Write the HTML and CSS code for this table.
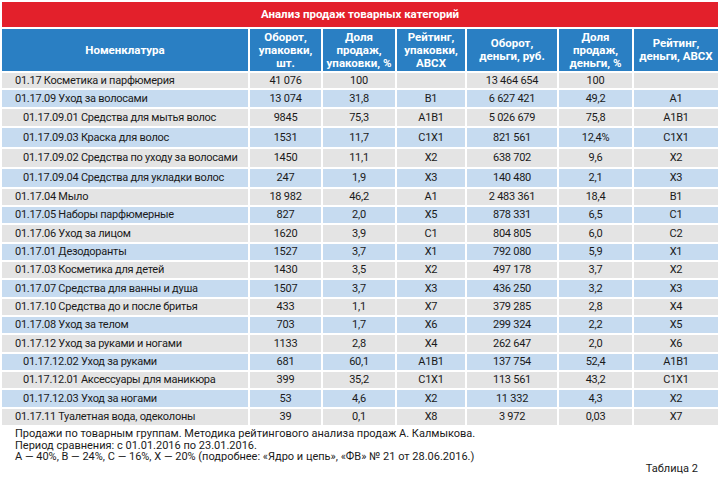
FILE: index.html
```html
<!DOCTYPE html>
<html lang="ru">
<head>
<meta charset="utf-8">
<link rel="stylesheet" href="styles.css">
</head>
<body>
<div class="title">Анализ продаж товарных категорий</div>
<table class="grid">
  <colgroup>
    <col class="c1"><col class="c2"><col class="c3"><col class="c4"><col class="c5"><col class="c6"><col class="c7">
  </colgroup>
  <thead>
    <tr>
      <th>Номенклатура</th>
      <th>Оборот,<br>упаковки,<br>шт.</th>
      <th>Доля<br>продаж,<br>упаковки, %</th>
      <th>Рейтинг,<br>упаковки,<br>ABCX</th>
      <th>Оборот,<br>деньги, руб.</th>
      <th>Доля<br>продаж,<br>деньги, %</th>
      <th>Рейтинг,<br>деньги, ABCX</th>
    </tr>
  </thead>
  <tbody>
    <tr class="g h15"><td>01.17 Косметика и парфюмерия</td><td>41 076</td><td>100</td><td></td><td>13 464 654</td><td>100</td><td></td></tr>
    <tr class="b h17"><td>01.17.09 Уход за волосами</td><td>13 074</td><td>31,8</td><td>B1</td><td>6 627 421</td><td>49,2</td><td>A1</td></tr>
    <tr class="g h17"><td class="ind">01.17.09.01 Средства для мытья волос</td><td>9845</td><td>75,3</td><td>A1B1</td><td>5 026 679</td><td>75,8</td><td>A1B1</td></tr>
    <tr class="b h19"><td class="ind">01.17.09.03 Краска для волос</td><td>1531</td><td>11,7</td><td>C1X1</td><td>821 561</td><td>12,4%</td><td>C1X1</td></tr>
    <tr class="g h18"><td class="ind">01.17.09.02 Средства по уходу за волосами</td><td>1450</td><td>11,1</td><td>X2</td><td>638 702</td><td>9,6</td><td>X2</td></tr>
    <tr class="b h18"><td class="ind">01.17.09.04 Средства для укладки волос</td><td>247</td><td>1,9</td><td>X3</td><td>140 480</td><td>2,1</td><td>X3</td></tr>
    <tr class="g h16"><td>01.17.04 Мыло</td><td>18 982</td><td>46,2</td><td>A1</td><td>2 483 361</td><td>18,4</td><td>B1</td></tr>
    <tr class="b h16"><td>01.17.05 Наборы парфюмерные</td><td>827</td><td>2,0</td><td>X5</td><td>878 331</td><td>6,5</td><td>C1</td></tr>
    <tr class="g h17"><td>01.17.06 Уход за лицом</td><td>1620</td><td>3,9</td><td>C1</td><td>804 805</td><td>6,0</td><td>C2</td></tr>
    <tr class="b h16"><td>01.17.01 Дезодоранты</td><td>1527</td><td>3,7</td><td>X1</td><td>792 080</td><td>5,9</td><td>X1</td></tr>
    <tr class="g h16"><td>01.17.03 Косметика для детей</td><td>1430</td><td>3,5</td><td>X2</td><td>497 178</td><td>3,7</td><td>X2</td></tr>
    <tr class="b h17"><td>01.17.07 Средства для ванны и душа</td><td>1507</td><td>3,7</td><td>X3</td><td>436 250</td><td>3,2</td><td>X3</td></tr>
    <tr class="g h16"><td>01.17.10 Средства до и после бритья</td><td>433</td><td>1,1</td><td>X7</td><td>379 285</td><td>2,8</td><td>X4</td></tr>
    <tr class="b h16"><td>01.17.08 Уход за телом</td><td>703</td><td>1,7</td><td>X6</td><td>299 324</td><td>2,2</td><td>X5</td></tr>
    <tr class="g h17"><td>01.17.12 Уход за руками и ногами</td><td>1133</td><td>2,8</td><td>X4</td><td>262 647</td><td>2,0</td><td>X6</td></tr>
    <tr class="b h16"><td class="ind">01.17.12.02 Уход за руками</td><td>681</td><td>60,1</td><td>A1B1</td><td>137 754</td><td>52,4</td><td>A1B1</td></tr>
    <tr class="g h16"><td class="ind">01.17.12.01 Аксессуары для маникюра</td><td>399</td><td>35,2</td><td>C1X1</td><td>113 561</td><td>43,2</td><td>C1X1</td></tr>
    <tr class="b h17"><td class="ind">01.17.12.03 Уход за ногами</td><td>53</td><td>4,6</td><td>X2</td><td>11 332</td><td>4,3</td><td>X2</td></tr>
    <tr class="g h16"><td>01.17.11 Туалетная вода, одеколоны</td><td>39</td><td>0,1</td><td>X8</td><td>3 972</td><td>0,03</td><td>X7</td></tr>
  </tbody>
</table>
<div class="notes">
  <p>Продажи по товарным группам. Методика рейтингового анализа продаж А. Калмыкова.</p>
  <p>Период сравнения: с 01.01.2016 по 23.01.2016.</p>
  <p>А — 40%, В — 24%, С — 16%, Х — 20% (подробнее: «Ядро и цепь», «ФВ» № 21 от 28.06.2016.)</p>
  <p class="caption">Таблица 2</p>
</div>
</body>
</html>
```

FILE: styles.css
```css
html, body {
  margin: 0;
  padding: 0;
  background: #ffffff;
}
body {
  width: 720px;
  height: 487px;
  overflow: hidden;
  font-family: Roboto, "Noto Sans", sans-serif;
  color: #1a1a1a;
}
.title {
  margin: 2px 2px 0;
  height: 25px;
  background: #e3202b;
  color: #ffffff;
  font-weight: 700;
  font-size: 11.5px;
  line-height: 25px;
  text-align: center;
}
.grid {
  width: 720px;
  table-layout: fixed;
  border-collapse: separate;
  border-spacing: 2px;
  font-size: 11px;
  letter-spacing: -0.25px;
}
.c1 { width: 246px; }
.c2 { width: 71px; }
.c3 { width: 72px; }
.c4 { width: 68px; }
.c5 { width: 90px; }
.c6 { width: 73px; }
.c7 { width: 84px; }
.grid th {
  height: 42px;
  padding: 0;
  background: #2a7fc3;
  color: #ffffff;
  font-weight: 700;
  font-size: 11.5px;
  letter-spacing: 0;
  line-height: 13px;
  text-align: center;
  vertical-align: middle;
}
.grid td {
  padding: 0;
  text-align: center;
  vertical-align: middle;
  line-height: 14px;
  white-space: nowrap;
  overflow: hidden;
}
.grid td:first-child {
  text-align: left;
  padding-left: 13px;
}
.grid td.ind {
  padding-left: 21px;
}
.g td { background: #e4e4e4; }
.b td { background: #c6dbf0; }
.h15 td { height: 15px; }
.h16 td { height: 16px; }
.h17 td { height: 17px; }
.h18 td { height: 18px; }
.h19 td { height: 19px; }
.notes {
  padding: 1px 22px 0 15px;
  font-size: 11px;
  line-height: 11.5px;
}
.notes p {
  margin: 0;
}
.notes .caption {
  text-align: right;
}
```
